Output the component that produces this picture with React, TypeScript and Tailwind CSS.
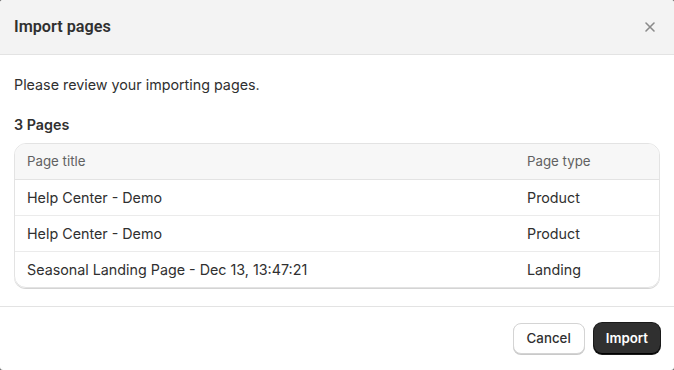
export default function App() {
  const rows = [
    { title: "Help Center - Demo", type: "Product" },
    { title: "Help Center - Demo", type: "Product" },
    { title: "Seasonal Landing Page - Dec 13, 13:47:21", type: "Landing" },
  ];

  return (
    <div className="w-[674px] h-[370px] bg-[#6b6b6b]">
      <div
        className="w-full h-full bg-white rounded-[3px] overflow-hidden flex flex-col text-[#303030]"
        style={{ fontFamily: "Inter, 'Noto Sans', sans-serif" }}
      >
        <div className="h-[55px] shrink-0 bg-[#f3f3f3] border-b border-[#e3e3e3] flex items-center justify-between pl-[14px] pr-[18px]">
          <h1
            className="text-[16.2px] font-semibold text-[#303030]"
            style={{ fontFamily: "Roboto, 'Liberation Sans', sans-serif" }}
          >
            Import pages
          </h1>
          <button className="text-[#8a8a8a]">
            <svg width="12" height="12" viewBox="0 0 12 12" fill="none">
              <path d="M2 2l8 8M10 2l-8 8" stroke="currentColor" strokeWidth="1.6" strokeLinecap="round" />
            </svg>
          </button>
        </div>

        <div className="px-[14px] pt-[20px] pb-[18px] border-b border-[#e3e3e3]">
          <p className="text-[14.3px] leading-[20px]">Please review your importing pages.</p>
          <p className="text-[14.3px] leading-[20px] font-semibold mt-[20px]">3 Pages</p>
          <div className="mt-[8px] border border-[#e3e3e3] rounded-[12px] overflow-hidden shadow-[0_1px_0_#d4d4d4]">
            <div className="h-[36px] bg-[#f7f7f7] border-b border-[#e3e3e3] flex items-center text-[13.3px] text-[#616161]">
              <div className="flex-1 pl-[12px]">Page title</div>
              <div className="w-[132px]">Page type</div>
            </div>
            {rows.map((r, i) => (
              <div
                key={i}
                className={`flex items-center text-[14.3px] ${i < rows.length - 1 ? "h-[36px] border-b border-[#ebebeb]" : "h-[35px]"}`}
              >
                <div className="flex-1 pl-[12px]">{r.title}</div>
                <div className="w-[132px]">{r.type}</div>
              </div>
            ))}
          </div>
        </div>

        <div className="flex-1 flex items-center justify-end gap-[9px] px-[14px]">
          <button className="h-[31px] px-[13px] rounded-[8px] bg-white border border-[#d4d4d4] shadow-[0_1px_0_#c9c9c9] text-[13.3px] font-medium text-[#303030]">
            Cancel
          </button>
          <button className="h-[31px] px-[12px] rounded-[8px] bg-[#303030] shadow-[inset_0_-1px_0_#000,0_0_0_1px_#1a1a1a] text-[13.3px] font-semibold text-white">
            Import
          </button>
        </div>
      </div>
    </div>
  );
}
